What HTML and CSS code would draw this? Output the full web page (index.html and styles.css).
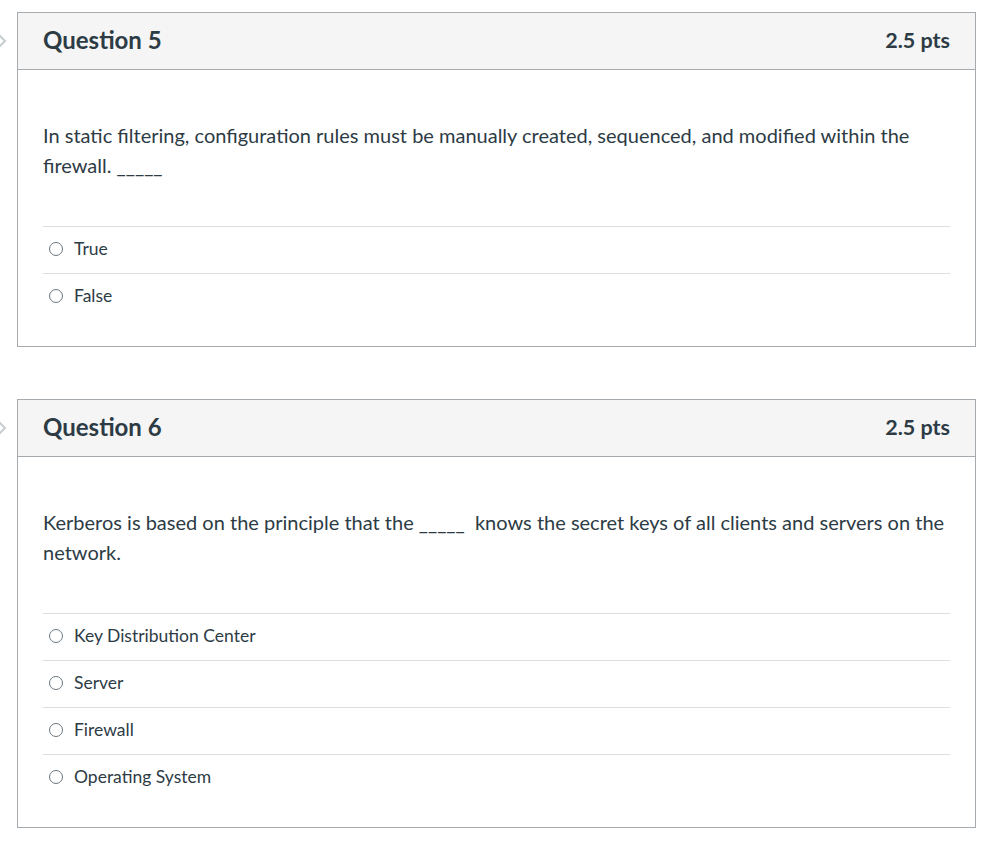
FILE: index.html
```html
<!DOCTYPE html>
<html>
<head>
<meta charset="utf-8">
<link rel="stylesheet" href="styles.css">
</head>
<body>
<div class="page">
  <div class="question">
    <svg class="marker" width="8" height="24" viewBox="0 0 8 24"><path d="M-6 1 L5 12 L-6 23" fill="none" stroke="#c7cdd1" stroke-width="2"/></svg>
    <div class="q-header">
      <h2 class="q-title">Question 5</h2>
      <span class="q-points">2.5 pts</span>
    </div>
    <div class="q-body">
      <p class="q-text">In static filtering, configuration rules must be manually created, sequenced, and modified within the firewall. _____</p>
      <div class="answers">
        <label class="answer"><span class="radio"></span><span>True</span></label>
        <label class="answer"><span class="radio"></span><span>False</span></label>
      </div>
    </div>
  </div>
  <div class="question">
    <svg class="marker" width="8" height="24" viewBox="0 0 8 24"><path d="M-6 1 L5 12 L-6 23" fill="none" stroke="#c7cdd1" stroke-width="2"/></svg>
    <div class="q-header">
      <h2 class="q-title">Question 6</h2>
      <span class="q-points">2.5 pts</span>
    </div>
    <div class="q-body">
      <p class="q-text">Kerberos is based on the principle that the _____&nbsp; knows the secret keys of all clients and servers on the network.</p>
      <div class="answers">
        <label class="answer"><span class="radio"></span><span>Key Distribution Center</span></label>
        <label class="answer"><span class="radio"></span><span>Server</span></label>
        <label class="answer"><span class="radio"></span><span>Firewall</span></label>
        <label class="answer"><span class="radio"></span><span>Operating System</span></label>
      </div>
    </div>
  </div>
</div>
</body>
</html>
```

FILE: styles.css
```css
html, body {
  margin: 0;
  padding: 0;
  background: #ffffff;
}
body {
  font-family: Lato, "Open Sans", sans-serif;
  color: #2d3b45;
}
.page {
  padding: 12px 0 0 17px;
  display: flex;
  flex-direction: column;
  gap: 52px;
}
.question {
  position: relative;
  width: 957px;
  border: 1px solid #a5abaf;
}
.marker {
  position: absolute;
  left: -18px;
  top: 16px;
}
.q-header {
  height: 56px;
  box-sizing: border-box;
  padding: 0 25px 3px 25px;
  background: #f5f5f5;
  border-bottom: 1px solid #a5abaf;
  display: flex;
  align-items: center;
  justify-content: space-between;
  height: 57px;
}
.q-title {
  margin: 0;
  font-size: 24px;
  font-weight: 700;
}
.q-points {
  font-size: 21.5px;
  font-weight: 700;
}
.q-body {
  padding: 50px 25px 26px 25px;
}
.q-text {
  margin: 0 0 46px 0;
  font-size: 20px;
  line-height: 30px;
}
.answers {
  display: flex;
  flex-direction: column;
}
.answer {
  height: 46px;
  box-sizing: content-box;
  border-top: 1px solid #dcdfe1;
  display: flex;
  align-items: center;
  gap: 11px;
  padding-left: 6px;
  font-size: 17.5px;
}
.answer span:last-child {
  position: relative;
  top: -2px;
}
.radio {
  width: 12px;
  height: 12px;
  border: 1.2px solid #6b7780;
  border-radius: 50%;
  box-sizing: content-box;
  position: relative;
  top: -1px;
}
```
